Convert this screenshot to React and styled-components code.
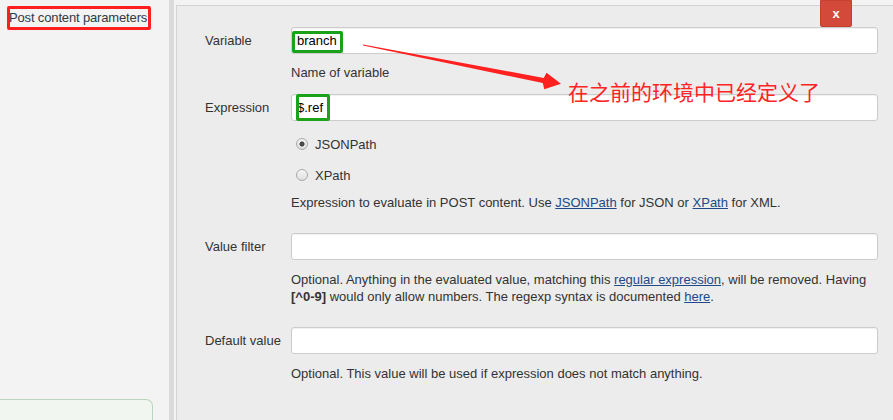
import React from "react";
import styled, { createGlobalStyle } from "styled-components";

const GlobalStyle = createGlobalStyle`
	html, body {
		margin: 0;
		padding: 0;
		background: #f3f3f3;
		font-family: "Liberation Sans", Arial, sans-serif;
		font-size: 13px;
		color: #333;
	}
`;

const Page = styled.div`
	position: relative;
	display: flex;
	height: 420px;
	overflow: hidden;
	background: #f3f3f3;
`;

const Sidebar = styled.aside`
	width: 169px;
	flex: none;
	display: flex;
	flex-direction: column;
`;

const SectionTitle = styled.div`
	margin: 6px 0 0 7px;
	width: 138px;
	height: 18px;
	line-height: 18px;
	border: 3px solid #ff1f1f;
	border-radius: 2px;
	white-space: nowrap;
	overflow: hidden;
	text-indent: -1px;
	letter-spacing: -0.15px;
	color: #2f3a48;
	font-size: 13px;
`;

const SideNote = styled.div`
	margin: auto 0 0 -10px;
	width: 161px;
	height: 20px;
	border: 1px solid #bcd4bc;
	border-bottom: none;
	border-radius: 7px 7px 0 0;
	background: #f2f6f0;
`;

const Splitter = styled.div`
	width: 5px;
	flex: none;
	background: #dadada;
	margin-right: 2px;
`;

const Panel = styled.section`
	position: relative;
	flex: 1;
	margin-top: 5px;
	padding: 21px 15px 0 28px;
	background: #ececec;
	border-top: 1px solid #d3d3d3;
	border-left: 1px solid #d3d3d3;
`;

const CloseButton = styled.button`
	position: absolute;
	top: -6px;
	right: 41px;
	width: 32px;
	height: 27px;
	border: 1px solid #c4412f;
	border-radius: 0 0 2px 2px;
	background: #d34a3a;
	color: #fff;
	font-family: "Liberation Sans", Arial, sans-serif;
	font-weight: bold;
	font-size: 13px;
	padding: 0;
	cursor: pointer;
`;

const Field = styled.div`
	display: grid;
	grid-template-columns: 86px 1fr;
	margin-top: ${(p) => p.$gap || 0}px;
`;

const Label = styled.label`
	height: 27px;
	line-height: 27px;
	white-space: nowrap;
	color: #333;
`;

const Control = styled.div`
	display: flex;
	flex-direction: column;
`;

const InputBox = styled.div`
	position: relative;
	height: 25px;
	line-height: 25px;
	padding-left: 5px;
	border: 1px solid #cccccc;
	border-radius: 3px;
	background: #fff;
	box-shadow: inset 0 1px 1px rgba(0, 0, 0, 0.06);
	font-size: 13px;
	color: #000;
`;

const Mark = styled.span`
	position: absolute;
	left: ${(p) => p.$left}px;
	top: ${(p) => p.$top}px;
	width: ${(p) => p.$width}px;
	height: ${(p) => p.$height}px;
	border: 3px solid #1aa31a;
	border-radius: 2px;
	box-sizing: border-box;
`;

const Help = styled.div`
	margin-top: ${(p) => p.$gap || 0}px;
	line-height: 17px;
	color: #333;
`;

const Link = styled.a`
	color: #204a87;
	text-decoration: underline;
`;

const RadioRow = styled.label`
	display: flex;
	align-items: center;
	height: 20px;
	margin-top: ${(p) => p.$gap || 0}px;
	padding-left: 5px;
	gap: 7px;
	color: #333;
`;

const Radio = styled.span`
	width: 12px;
	height: 12px;
	box-sizing: border-box;
	border-radius: 50%;
	border: 1px solid #a8a8a8;
	background: ${(p) =>
		p.$checked
			? "radial-gradient(circle, #4a4a4a 0 2.3px, transparent 2.8px), linear-gradient(#f4f4f4, #dedede)"
			: "linear-gradient(#f6f6f6, #e0e0e0)"};
`;

const Arrow = styled.svg`
	position: absolute;
	left: 0;
	top: 0;
	pointer-events: none;
`;

const Remark = styled.div`
	position: absolute;
	left: 568px;
	top: 79px;
	line-height: 24px;
	font-size: 21px;
	color: #ff2424;
	font-family: "Noto Sans CJK SC", "Noto Sans", sans-serif;
	white-space: nowrap;
`;

function App() {
	return (
		<>
			<GlobalStyle />
			<Page>
				<Sidebar>
					<SectionTitle>Post content parameters</SectionTitle>
					<SideNote />
				</Sidebar>
				<Splitter />
				<Panel>
					<CloseButton>x</CloseButton>

					<Field>
						<Label>Variable</Label>
						<Control>
							<InputBox>
								branch
								<Mark $left={0} $top={3} $width={51} $height={22} />
							</InputBox>
							<Help $gap={10}>Name of variable</Help>
						</Control>
					</Field>

					<Field $gap={13}>
						<Label>Expression</Label>
						<Control>
							<InputBox>
								$.ref
								<Mark $left={4} $top={-1} $width={34} $height={27} />
							</InputBox>
							<RadioRow $gap={13}>
								<Radio $checked />
								JSONPath
							</RadioRow>
							<RadioRow $gap={11}>
								<Radio />
								XPath
							</RadioRow>
							<Help $gap={9}>
								Expression to evaluate in POST content. Use{" "}
								<Link href="#">JSONPath</Link> for JSON or{" "}
								<Link href="#">XPath</Link> for XML.
							</Help>
						</Control>
					</Field>

					<Field $gap={22}>
						<Label>Value filter</Label>
						<Control>
							<InputBox />
							<Help $gap={11}>
								Optional. Anything in the evaluated value, matching this{" "}
								<Link href="#">regular expression</Link>, will be removed.
								Having <b>[^0-9]</b> would only allow numbers. The regexp
								syntax is documented <Link href="#">here</Link>.
							</Help>
						</Control>
					</Field>

					<Field $gap={22}>
						<Label>Default value</Label>
						<Control>
							<InputBox />
							<Help $gap={11}>
								Optional. This value will be used if expression does not
								match anything.
							</Help>
						</Control>
					</Field>
				</Panel>

				<Arrow width="893" height="420" viewBox="0 0 893 420">
					<polygon
						points="363,44.5 543.8,78 546.5,72.7 561,83.8 544.3,89.3 542.8,83 363,45.6"
						fill="#ff2020"
					/>
				</Arrow>
				<Remark>在之前的环境中已经定义了</Remark>
			</Page>
		</>
	);
}

export default App;
